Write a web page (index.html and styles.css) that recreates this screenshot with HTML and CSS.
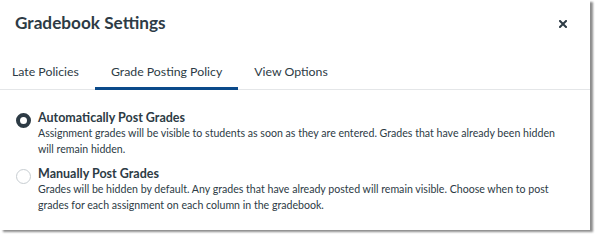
FILE: index.html
```html
<!DOCTYPE html>
<html lang="en">
<head>
<meta charset="utf-8">
<title>Gradebook Settings</title>
<link rel="stylesheet" href="styles.css">
</head>
<body>
<div class="modal">
  <header class="head">
    <h1 class="title">Gradebook Settings</h1>
    <button class="close" aria-label="Close">
      <svg width="8" height="8" viewBox="0 0 8 8"><path d="M1 1L7 7M7 1L1 7" stroke="#2d3b45" stroke-width="2" stroke-linecap="square"/></svg>
    </button>
  </header>
  <nav class="tabs">
    <span class="tab">Late Policies</span>
    <span class="tab active">Grade Posting Policy</span>
    <span class="tab">View Options</span>
  </nav>
  <div class="options">
    <label class="opt">
      <span class="radio checked"></span>
      <span class="txt">
        <span class="lbl">Automatically Post Grades</span>
        <span class="desc">Assignment grades will be visible to students as soon as they are entered. Grades that have already been hidden will remain hidden.</span>
      </span>
    </label>
    <label class="opt">
      <span class="radio"></span>
      <span class="txt">
        <span class="lbl">Manually Post Grades</span>
        <span class="desc">Grades will be hidden by default. Any grades that have already posted will remain visible. Choose when to post grades for each assignment on each column in the gradebook.</span>
      </span>
    </label>
  </div>
</div>
</body>
</html>
```

FILE: styles.css
```css
* { box-sizing: border-box; }
html, body { margin: 0; padding: 0; background: #ffffff; }
body {
  font-family: Lato, "Noto Sans", sans-serif;
  color: #2d3b45;
  width: 600px;
  height: 238px;
  overflow: hidden;
}
.modal {
  width: 590px;
  height: 230px;
  background: #ffffff;
  box-shadow: 3px 2px 2px rgba(0, 0, 0, 0.45);
  display: flex;
  flex-direction: column;
}
.head {
  display: flex;
  justify-content: space-between;
  align-items: flex-start;
  padding: 12px 23px 0 15px;
  height: 54px;
}
.title {
  margin: 0;
  font-size: 17.2px;
  line-height: 22px;
  font-weight: 700;
}
.close {
  border: 0;
  background: none;
  padding: 0;
  margin-top: 8px;
  width: 8px;
  height: 8px;
  display: flex;
}
.tabs {
  display: flex;
  margin-left: -4px;
  border-bottom: 1px solid #e4e6e8;
}
.tab {
  font-size: 12.3px;
  line-height: 20px;
  padding: 8px 16px 5px;
  border-bottom: 3px solid transparent;
  margin-bottom: -1px;
}
.tab.active {
  border-bottom-color: #0b4a8a;
}
.options {
  display: flex;
  flex-direction: column;
  gap: 8px;
  padding: 19px 20px 0 16px;
}
.opt {
  display: flex;
  gap: 7px;
  align-items: flex-start;
}
.radio {
  flex: none;
  width: 15px;
  height: 15px;
  margin-top: 4px;
  border-radius: 50%;
  border: 1px solid #c7cdd1;
  background: #fff;
}
.radio.checked {
  border: 4px solid #2d3b45;
}
.txt {
  display: flex;
  flex-direction: column;
}
.lbl {
  font-size: 12.5px;
  line-height: 17px;
  font-weight: 700;
}
.desc {
  font-size: 10.6px;
  line-height: 15.5px;
}
```
